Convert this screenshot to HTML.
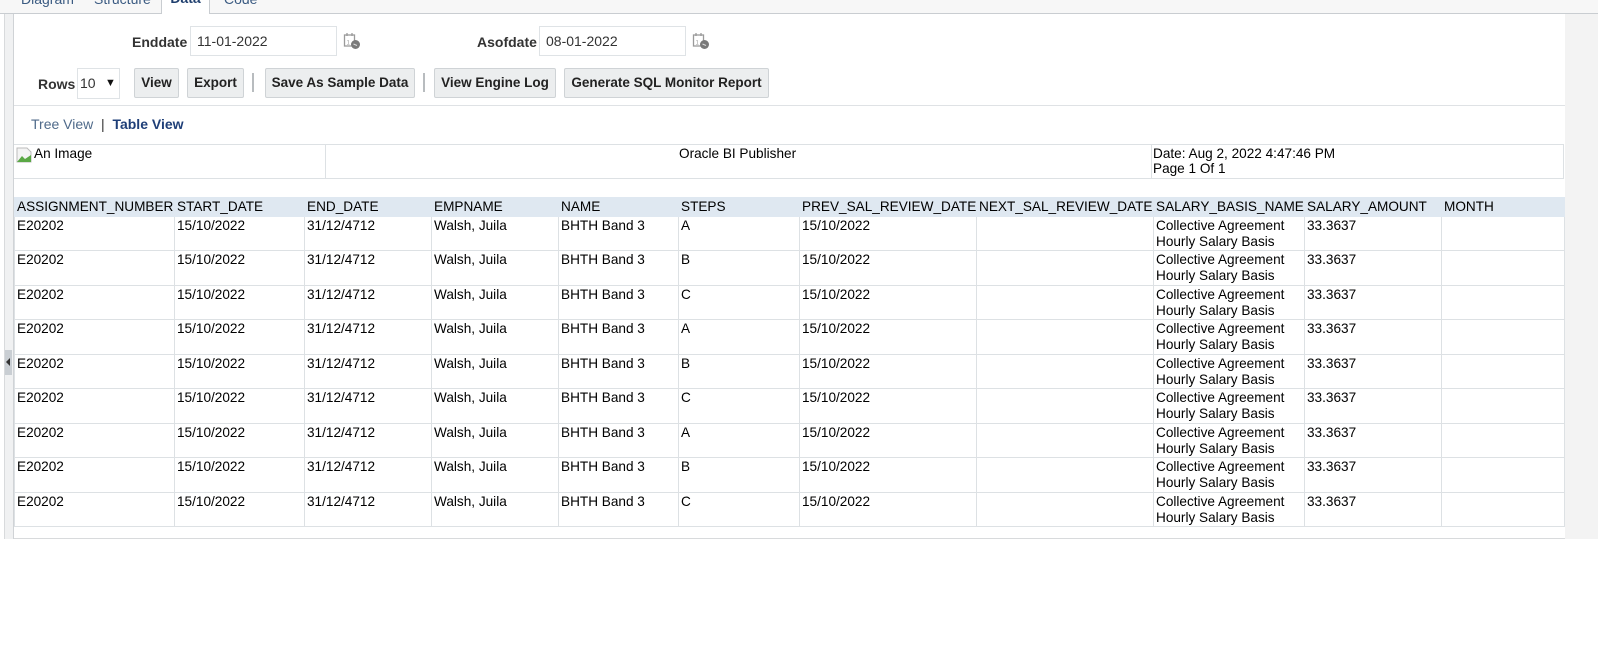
<!DOCTYPE html>
<html><head><meta charset="utf-8">
<style>
*{box-sizing:border-box;margin:0;padding:0}
body{width:1620px;height:648px;background:#fff;font-family:"Liberation Sans",Arial,sans-serif;position:relative;overflow:hidden;color:#000}
.abs{position:absolute}
.tabs{left:0;top:0;width:1598px;height:14px;background:#f7f7f7;border-bottom:1px solid #c9cdd1}
.tab{position:absolute;top:-9px;font-size:14px;color:#3b5b82}
.datatab{position:absolute;left:161px;top:-2px;width:49px;height:16px;background:#fff;border:1px solid #c9cdd1;border-bottom:none;font-weight:bold;font-size:14px;color:#1f3f6e;text-align:center;line-height:0}
.strip{left:4px;top:14px;width:10px;height:525px;background:#f0f1f2;border-left:1px solid #d8dadc;border-right:1px solid #d0d3d6}
.panel{left:14px;top:14px;width:1551px;height:525px;background:#fff;border-bottom:1px solid #d8dadc}
.hatch{left:1565px;top:14px;width:33px;height:525px;background:#f3f3f3}
.lbl{font-size:14px;font-weight:bold;color:#333}
.inp{height:30px;border:1px solid #dfe3e6;background:#fff;font-size:14px;color:#333;padding-left:6px;line-height:28px}
.btn{top:68px;height:30px;background:#eceeef;border:1px solid #cfd3d6;border-radius:2px;font-size:13.5px;font-weight:bold;color:#222;text-align:center;line-height:28px}
.sep{top:73px;width:2px;height:19px;background:#b8bcbf}
table{border-collapse:collapse;font-size:13.6px;table-layout:fixed}
.data td,.data th{border:1px solid #dde1e4;vertical-align:top;padding:0 2px;line-height:16px;font-weight:normal;text-align:left;white-space:nowrap;overflow:visible}
.data th{background:#dfe8f1;height:19px;padding-top:1px;border-color:#dfe8f1}
.data td{height:34px;padding-top:1px}
.data tr:nth-child(odd) td{height:35px}
</style></head><body>
<div class="abs tabs">
 <div class="tab" style="left:21px">Diagram</div>
 <div class="tab" style="left:94px">Structure</div>
 <div class="datatab"><span style="position:relative;top:-1px">Data</span></div>
 <div class="tab" style="left:224px">Code</div>
</div>
<div class="abs strip"></div>
<div class="abs" style="left:5px;top:350px;width:7px;height:25px;background:#c9ced3"></div>
<div class="abs" style="left:6px;top:358px;width:0;height:0;border-top:4px solid transparent;border-bottom:4px solid transparent;border-right:4px solid #333"></div>
<div class="abs panel"></div>
<div class="abs hatch"></div>

<div class="abs lbl" style="left:132px;top:34px">Enddate</div>
<div class="abs inp" style="left:190px;top:26px;width:147px">11-01-2022</div>
<svg class="abs" style="left:343px;top:32px" width="18" height="18" viewBox="0 0 18 18">
 <rect x="1.5" y="3" width="10" height="11" fill="none" stroke="#9a9a9a" stroke-width="1.3"/>
 <line x1="4" y1="1" x2="4" y2="4" stroke="#9a9a9a" stroke-width="1.3"/><line x1="9" y1="1" x2="9" y2="4" stroke="#9a9a9a" stroke-width="1.3"/>
 <text x="3.5" y="12.5" font-size="6" fill="#999" font-family="Liberation Sans">1</text>
 <circle cx="12.5" cy="12.5" r="4.5" fill="#7a7a7a"/><line x1="10.5" y1="12" x2="14" y2="13.5" stroke="#ddd" stroke-width="1"/>
</svg>
<div class="abs lbl" style="left:477px;top:34px">Asofdate</div>
<div class="abs inp" style="left:539px;top:26px;width:147px">08-01-2022</div>
<svg class="abs" style="left:692px;top:32px" width="18" height="18" viewBox="0 0 18 18">
 <rect x="1.5" y="3" width="10" height="11" fill="none" stroke="#9a9a9a" stroke-width="1.3"/>
 <line x1="4" y1="1" x2="4" y2="4" stroke="#9a9a9a" stroke-width="1.3"/><line x1="9" y1="1" x2="9" y2="4" stroke="#9a9a9a" stroke-width="1.3"/>
 <text x="3.5" y="12.5" font-size="6" fill="#999" font-family="Liberation Sans">1</text>
 <circle cx="12.5" cy="12.5" r="4.5" fill="#7a7a7a"/><line x1="10.5" y1="12" x2="14" y2="13.5" stroke="#ddd" stroke-width="1"/>
</svg>

<div class="abs lbl" style="left:38px;top:76px">Rows</div>
<div class="abs inp" style="left:77px;top:68px;width:43px;height:31px;padding-left:2px;line-height:29px">10<span style="position:absolute;left:27px;top:0;font-size:11px;color:#111">&#9660;</span></div>
<div class="abs btn" style="left:134px;width:45px">View</div>
<div class="abs btn" style="left:187px;width:57px">Export</div>
<div class="abs sep" style="left:252px"></div>
<div class="abs btn" style="left:265px;width:150px">Save As Sample Data</div>
<div class="abs sep" style="left:423px"></div>
<div class="abs btn" style="left:434px;width:122px">View Engine Log</div>
<div class="abs btn" style="left:564px;width:205px">Generate SQL Monitor Report</div>
<div class="abs" style="left:14px;top:105px;width:1551px;height:1px;background:#dfe2e5"></div>

<div class="abs" style="left:31px;top:116px;font-size:14px;color:#4f6a8a">Tree View &nbsp;<span style="color:#333">|</span>&nbsp; <b style="color:#1f3f78">Table View</b></div>

<div class="abs" style="left:14px;top:144px;width:1550px;height:35px;border-top:1px solid #dde1e4;border-bottom:1px solid #dde1e4"></div>
<div class="abs" style="left:325px;top:144px;width:1px;height:35px;background:#dde1e4"></div>
<div class="abs" style="left:1151px;top:144px;width:1px;height:35px;background:#dde1e4"></div>
<div class="abs" style="left:1563px;top:144px;width:1px;height:35px;background:#dde1e4"></div>
<svg class="abs" style="left:16px;top:147px" width="16" height="16"><path d="M1 15 L1 1 L11 1 L15 5 L15 15 Z" fill="#f4f4f4" stroke="#bbb"/><path d="M1 15 L6 9 L9 12 L15 8 L15 15Z" fill="#5aa845"/></svg>
<div class="abs" style="left:34px;top:146px;font-size:13.6px">An Image</div>
<div class="abs" style="left:679px;top:146px;font-size:13.6px">Oracle BI Publisher</div>
<div class="abs" style="left:1153px;top:146px;font-size:13.6px;line-height:15px">Date: Aug 2, 2022 4:47:46 PM<br>Page 1 Of 1</div>

<table class="abs data" style="left:14px;top:197px;width:1550px">
<colgroup><col style="width:160px"><col style="width:130px"><col style="width:127px"><col style="width:127px"><col style="width:120px"><col style="width:121px"><col style="width:177px"><col style="width:177px"><col style="width:151px"><col style="width:137px"><col style="width:123px"></colgroup>
<tr><th>ASSIGNMENT_NUMBER</th><th>START_DATE</th><th>END_DATE</th><th>EMPNAME</th><th>NAME</th><th>STEPS</th><th>PREV_SAL_REVIEW_DATE</th><th>NEXT_SAL_REVIEW_DATE</th><th>SALARY_BASIS_NAME</th><th>SALARY_AMOUNT</th><th>MONTH</th></tr>
<tr><td>E20202</td><td>15/10/2022</td><td>31/12/4712</td><td>Walsh, Juila</td><td>BHTH Band 3</td><td>A</td><td>15/10/2022</td><td></td><td>Collective Agreement<br>Hourly Salary Basis</td><td>33.3637</td><td></td></tr>
<tr><td>E20202</td><td>15/10/2022</td><td>31/12/4712</td><td>Walsh, Juila</td><td>BHTH Band 3</td><td>B</td><td>15/10/2022</td><td></td><td>Collective Agreement<br>Hourly Salary Basis</td><td>33.3637</td><td></td></tr>
<tr><td>E20202</td><td>15/10/2022</td><td>31/12/4712</td><td>Walsh, Juila</td><td>BHTH Band 3</td><td>C</td><td>15/10/2022</td><td></td><td>Collective Agreement<br>Hourly Salary Basis</td><td>33.3637</td><td></td></tr>
<tr><td>E20202</td><td>15/10/2022</td><td>31/12/4712</td><td>Walsh, Juila</td><td>BHTH Band 3</td><td>A</td><td>15/10/2022</td><td></td><td>Collective Agreement<br>Hourly Salary Basis</td><td>33.3637</td><td></td></tr>
<tr><td>E20202</td><td>15/10/2022</td><td>31/12/4712</td><td>Walsh, Juila</td><td>BHTH Band 3</td><td>B</td><td>15/10/2022</td><td></td><td>Collective Agreement<br>Hourly Salary Basis</td><td>33.3637</td><td></td></tr>
<tr><td>E20202</td><td>15/10/2022</td><td>31/12/4712</td><td>Walsh, Juila</td><td>BHTH Band 3</td><td>C</td><td>15/10/2022</td><td></td><td>Collective Agreement<br>Hourly Salary Basis</td><td>33.3637</td><td></td></tr>
<tr><td>E20202</td><td>15/10/2022</td><td>31/12/4712</td><td>Walsh, Juila</td><td>BHTH Band 3</td><td>A</td><td>15/10/2022</td><td></td><td>Collective Agreement<br>Hourly Salary Basis</td><td>33.3637</td><td></td></tr>
<tr><td>E20202</td><td>15/10/2022</td><td>31/12/4712</td><td>Walsh, Juila</td><td>BHTH Band 3</td><td>B</td><td>15/10/2022</td><td></td><td>Collective Agreement<br>Hourly Salary Basis</td><td>33.3637</td><td></td></tr>
<tr><td>E20202</td><td>15/10/2022</td><td>31/12/4712</td><td>Walsh, Juila</td><td>BHTH Band 3</td><td>C</td><td>15/10/2022</td><td></td><td>Collective Agreement<br>Hourly Salary Basis</td><td>33.3637</td><td></td></tr>
</table>
</body></html>
